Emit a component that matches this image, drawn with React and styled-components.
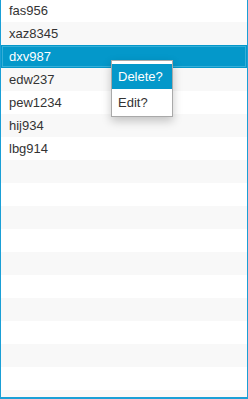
import React from 'react';
import styled, { createGlobalStyle } from 'styled-components';

const GlobalStyle = createGlobalStyle`
  html, body {
    margin: 0;
    padding: 0;
    background: #ffffff;
  }
  body {
    font-family: "Liberation Sans", Arial, sans-serif;
  }
`;

const Frame = styled.div`
  position: relative;
  width: 248px;
  height: 399px;
  box-sizing: border-box;
  border-left: 1px solid #1a9fd6;
  border-right: 1px solid #1a9fd6;
  border-bottom: 2px solid #1a9fd6;
  box-shadow: inset 0 -1px 0 #6cc3e8;
  overflow: hidden;
`;

const List = styled.ul`
  list-style: none;
  margin: -1px 0 0 0;
  padding: 0;
`;

const Row = styled.li`
  box-sizing: border-box;
  height: 23px;
  line-height: 23px;
  padding-left: 8px;
  font-size: 13px;
  color: ${props => (props.$selected ? '#ffffff' : '#333333')};
  background: ${props =>
    props.$selected ? '#0498ca' : props.$odd ? '#f8f8f8' : '#ffffff'};
  outline: ${props => (props.$selected ? '1px solid #36aed8' : 'none')};
  outline-offset: -2px;
`;

const Menu = styled.div`
  position: absolute;
  left: 110px;
  top: 60px;
  width: 62px;
  box-sizing: border-box;
  padding-top: 3px;
  background: #ffffff;
  border: 1px solid #a9a9a9;
  box-shadow: 0 4px 9px rgba(0, 0, 0, 0.22);
`;

const MenuItem = styled.div`
  height: ${props => (props.$active ? '25px' : '27px')};
  line-height: ${props => (props.$active ? '25px' : '27px')};
  padding-left: 6px;
  font-size: 13px;
  color: ${props => (props.$active ? '#ffffff' : '#333333')};
  background: ${props => (props.$active ? '#0498ca' : '#ffffff')};
`;

const items = ['fas956', 'xaz8345', 'dxv987', 'edw237', 'pew1234', 'hij934', 'lbg914'];

export default function App() {
  const rows = Array.from({ length: 18 }, (_, i) => items[i] || '');
  return (
    <>
      <GlobalStyle />
      <Frame>
        <List>
          {rows.map((text, i) => (
            <Row key={i} $odd={i % 2 === 1} $selected={i === 2}>
              {text}
            </Row>
          ))}
        </List>
        <Menu>
          <MenuItem $active>Delete?</MenuItem>
          <MenuItem>Edit?</MenuItem>
        </Menu>
      </Frame>
    </>
  );
}
